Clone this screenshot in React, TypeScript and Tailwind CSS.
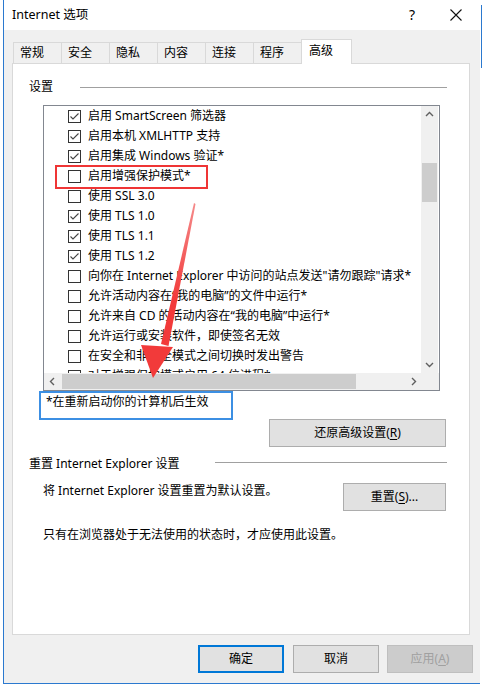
import React from "react";

const rows: { c: boolean; t: string }[] = [
  { c: true, t: "启用 SmartScreen 筛选器" },
  { c: true, t: "启用本机 XMLHTTP 支持" },
  { c: true, t: "启用集成 Windows 验证*" },
  { c: false, t: "启用增强保护模式*" },
  { c: false, t: "使用 SSL 3.0" },
  { c: true, t: "使用 TLS 1.0" },
  { c: true, t: "使用 TLS 1.1" },
  { c: true, t: "使用 TLS 1.2" },
  { c: false, t: "向你在 Internet Explorer 中访问的站点发送\"请勿跟踪\"请求*" },
  { c: false, t: "允许活动内容在“我的电脑”的文件中运行*" },
  { c: false, t: "允许来自 CD 的活动内容在“我的电脑”中运行*" },
  { c: false, t: "允许运行或安装软件，即使签名无效" },
  { c: false, t: "在安全和非安全模式之间切换时发出警告" },
  { c: false, t: "对于增强保护模式启用 64 位进程*" },
];

function Check({ on }: { on: boolean }) {
  return (
    <div className="w-[13px] h-[13px] border border-[#333333] bg-white shrink-0 flex items-center justify-center">
      {on && (
        <svg width="11" height="11" viewBox="0 0 11 11">
          <polyline points="1.5,5.5 4,8 9.5,2.5" fill="none" stroke="#444" strokeWidth="1.1" />
        </svg>
      )}
    </div>
  );
}

function Chevron({ dir }: { dir: "up" | "down" | "left" | "right" }) {
  const pts =
    dir === "up"
      ? "1,6 4.5,2.5 8,6"
      : dir === "down"
      ? "1,3 4.5,6.5 8,3"
      : dir === "left"
      ? "6,1 2.5,4.5 6,8"
      : "3,1 6.5,4.5 3,8";
  return (
    <svg width="9" height="9" viewBox="0 0 9 9">
      <polyline points={pts} fill="none" stroke="#606060" strokeWidth="1.4" />
    </svg>
  );
}

const tabs = ["常规", "安全", "隐私", "内容", "连接", "程序"];

export default function App() {
  return (
    <div className="relative w-[483px] h-[686px] bg-white overflow-hidden font-['Noto_Sans','Noto_Sans_CJK_SC',sans-serif] text-[12px] leading-[16px] text-black">
      <div className="ml-[3px] w-[477px] h-[684px] border-l border-b border-[#2b79cf] bg-[#f0f0f0] flex flex-col">
        {/* title bar */}
        <div className="h-[30px] bg-white flex items-center shrink-0">
          <span className="pl-[8px] text-[12.5px]">Internet 选项</span>
          <div className="ml-auto flex h-full">
            <div className="w-[40px] h-full flex items-center justify-center text-[14px]">?</div>
            <div className="w-[48px] h-full flex items-center justify-center">
              <svg width="12" height="12" viewBox="0 0 12 12">
                <path d="M0.5 0.5 L11.5 11.5 M11.5 0.5 L0.5 11.5" stroke="#111" strokeWidth="1.1" />
              </svg>
            </div>
          </div>
        </div>

        {/* tabs */}
        <div className="pt-[9px] pl-[9px] h-[33px] flex items-end shrink-0">
          {tabs.map((t) => (
            <div
              key={t}
              className="h-[21px] w-[48px] pl-[6px] flex items-center border-t border-l border-[#d9d9d9] bg-[#f0f0f0]"
            >
              {t}
            </div>
          ))}
          <div className="relative z-10 h-[25px] w-[51px] mb-[-1px] pl-[7px] pb-[3px] flex items-center border-t border-l border-r border-[#d9d9d9] bg-white">
            高级
          </div>
        </div>

        {/* panel */}
        <div className="ml-[8px] w-[458px] h-[572px] border border-[#d9d9d9] bg-white shrink-0">
          <div className="pt-[15px] pl-[16px] pr-[22px] h-[31px] flex items-start">
            <span className="h-[16px]">设置</span>
            <div className="ml-[27px] flex-1 mt-[8px] border-t border-[#a0a0a0]" />
          </div>

          {/* list box */}
          <div className="mt-[10px] ml-[30px] w-[397px] h-[286px] border border-[#828790] flex flex-col">
            <div className="flex h-[267px]">
              <div className="w-[377px] h-full overflow-hidden bg-white">
                {rows.map((r, i) => (
                  <div key={i} className="h-[20px] flex items-center pl-[24px] whitespace-nowrap">
                    <Check on={r.c} />
                    <span className="ml-[7px]">{r.t}</span>
                  </div>
                ))}
              </div>
              <div className="w-[17px] h-full bg-[#f0f0f0] flex flex-col items-center">
                <div className="h-[17px] w-full flex items-center justify-center">
                  <Chevron dir="up" />
                </div>
                <div className="mt-[40px] w-[15px] h-[39px] bg-[#cdcdcd]" />
                <div className="mt-auto h-[17px] w-full flex items-center justify-center">
                  <Chevron dir="down" />
                </div>
              </div>
            </div>
            <div className="flex h-[17px] bg-[#f0f0f0]">
              <div className="w-[17px] h-full flex items-center justify-center">
                <Chevron dir="left" />
              </div>
              <div className="ml-[1px] w-[294px] h-[15px] mt-[1px] bg-[#cdcdcd]" />
              <div className="ml-auto w-[17px] h-full flex items-center justify-center mr-[17px]">
                <Chevron dir="right" />
              </div>
            </div>
          </div>

          {/* note */}
          <div className="h-[28px] pt-[3px] pl-[33px]">*在重新启动你的计算机后生效</div>

          <div className="flex justify-end pr-[23px]">
            <div className="w-[177px] h-[28px] border border-[#adadad] bg-[#e1e1e1] flex items-center justify-center">
              还原高级设置(<span className="underline underline-offset-2">R</span>)
            </div>
          </div>

          <div className="mt-[9px] pl-[16px] pr-[22px] h-[16px] flex items-start">
            <span>重置 Internet Explorer 设置</span>
            <div className="ml-[35px] flex-1 mt-[6px] border-t border-[#a0a0a0]" />
          </div>

          <div className="mt-[11px] pl-[30px] pr-[23px] flex items-start">
            <span>将 Internet Explorer 设置重置为默认设置。</span>
            <div className="ml-auto w-[103px] h-[28px] border border-[#adadad] bg-[#e1e1e1] flex items-center justify-center">
              重置(<span className="underline underline-offset-2">S</span>)...
            </div>
          </div>

          <div className="mt-[16px] pl-[30px]">只有在浏览器处于无法使用的状态时，才应使用此设置。</div>
        </div>

        {/* bottom buttons */}
        <div className="mt-[10px] flex justify-end pr-[7px]">
          <div className="w-[86px] h-[28px] border-2 border-[#0078d7] bg-[#e1e1e1] flex items-center justify-center">
            确定
          </div>
          <div className="ml-[9px] w-[86px] h-[28px] border border-[#adadad] bg-[#e1e1e1] flex items-center justify-center">
            取消
          </div>
          <div className="ml-[8px] w-[86px] h-[28px] border border-[#bfbfbf] bg-[#cccccc] text-[#a0a0a0] flex items-center justify-center">
            应用(<span className="underline underline-offset-2">A</span>)
          </div>
        </div>
      </div>

      {/* background artifact at right edge */}
      <div className="absolute left-[481px] top-[5px] w-[1px] h-[63px] bg-[#2b79cf]" />

      {/* annotations */}
      <div className="absolute left-[55px] top-[165px] w-[153px] h-[24px] border-2 border-[#ef3535]" />
      <div className="absolute left-[39px] top-[391px] w-[194px] h-[29px] border-2 border-[#3c8fe3]" />
      <svg className="absolute left-0 top-0 pointer-events-none" width="483" height="686" viewBox="0 0 483 686">
        <defs>
          <linearGradient id="ag" x1="0" y1="203" x2="0" y2="300" gradientUnits="userSpaceOnUse">
            <stop offset="0" stopColor="#f58a8a" />
            <stop offset="1" stopColor="#f23a3a" />
          </linearGradient>
        </defs>
        <polygon points="194,203 195.5,204 168.5,346 161,344" fill="url(#ag)" />
        <polygon points="141,345 173,347 153,378" fill="#f23a3a" />
      </svg>
    </div>
  );
}
